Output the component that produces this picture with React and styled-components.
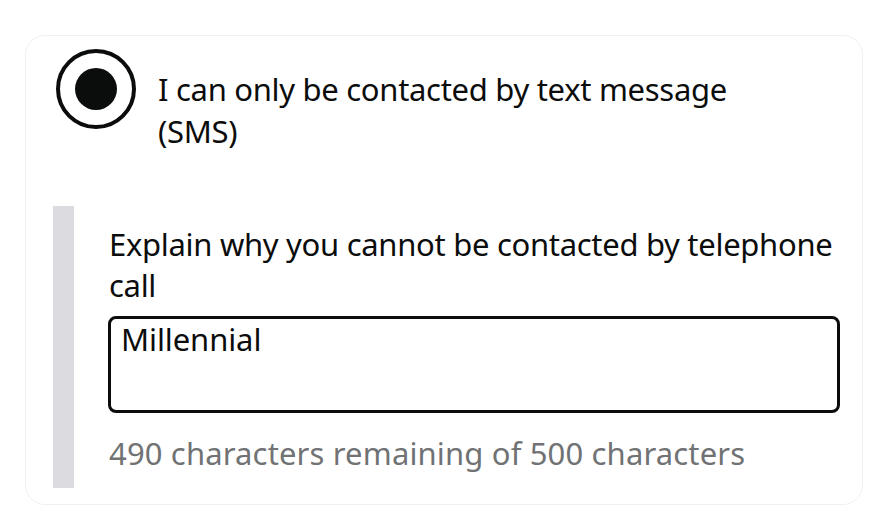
import React from 'react';
import styled, { createGlobalStyle } from 'styled-components';

const GlobalStyle = createGlobalStyle`
  body {
    margin: 0;
    background: #ffffff;
    font-family: "Noto Sans", "Liberation Sans", sans-serif;
    color: #0b0c0c;
  }
`;

const Card = styled.div`
  box-sizing: border-box;
  width: 838px;
  height: 470px;
  margin: 35px 0 0 25px;
  padding: 13px 24px 0 27px;
  border: 1px solid #f0f0f0;
  border-radius: 20px;
  background: #ffffff;
`;

const RadioRow = styled.label`
  display: flex;
  align-items: flex-start;
  gap: 22px;
  margin-left: 3px;
`;

const Radio = styled.span`
  box-sizing: border-box;
  flex: none;
  width: 80px;
  height: 80px;
  border: 4px solid #0b0c0c;
  border-radius: 50%;
  display: flex;
  align-items: center;
  justify-content: center;

  &::after {
    content: "";
    width: 42px;
    height: 42px;
    border-radius: 50%;
    background: #0b0c0c;
  }
`;

const Text = styled.span`
  display: block;
  font-size: 31px;
  line-height: ${p => p.lh || 41}px;
  letter-spacing: ${p => p.muted ? '0.15px' : '-0.3px'};
  color: ${p => p.muted ? '#707274' : '#0b0c0c'};
`;

const RadioLabel = styled(Text)`
  margin-top: 19px;
  width: 590px;
`;

const Conditional = styled.div`
  margin-top: 54px;
  border-left: 21px solid #dcdce0;
  padding: 18px 0 14px 35px;
`;

const Hint = styled(Text)`
  width: 732px;
`;

const TextArea = styled.textarea`
  display: block;
  box-sizing: border-box;
  width: 732px;
  height: 97px;
  margin: 10px 0 20px -1px;
  padding: 0 10px;
  border: 3px solid #0b0c0c;
  border-radius: 8px;
  resize: none;
  outline: none;
  font-family: inherit;
  font-size: 31px;
  line-height: 40px;
  letter-spacing: -0.1px;
  color: #0b0c0c;
  background: #ffffff;
`;

export default function App() {
  return (
    <>
      <GlobalStyle />
      <Card>
        <RadioRow>
          <Radio />
          <RadioLabel lh={42}>I can only be contacted by text message (SMS)</RadioLabel>
        </RadioRow>
        <Conditional>
          <Hint as="label">Explain why you cannot be contacted by telephone call</Hint>
          <TextArea defaultValue="Millennial" />
          <Text muted>490 characters remaining of 500 characters</Text>
        </Conditional>
      </Card>
    </>
  );
}
